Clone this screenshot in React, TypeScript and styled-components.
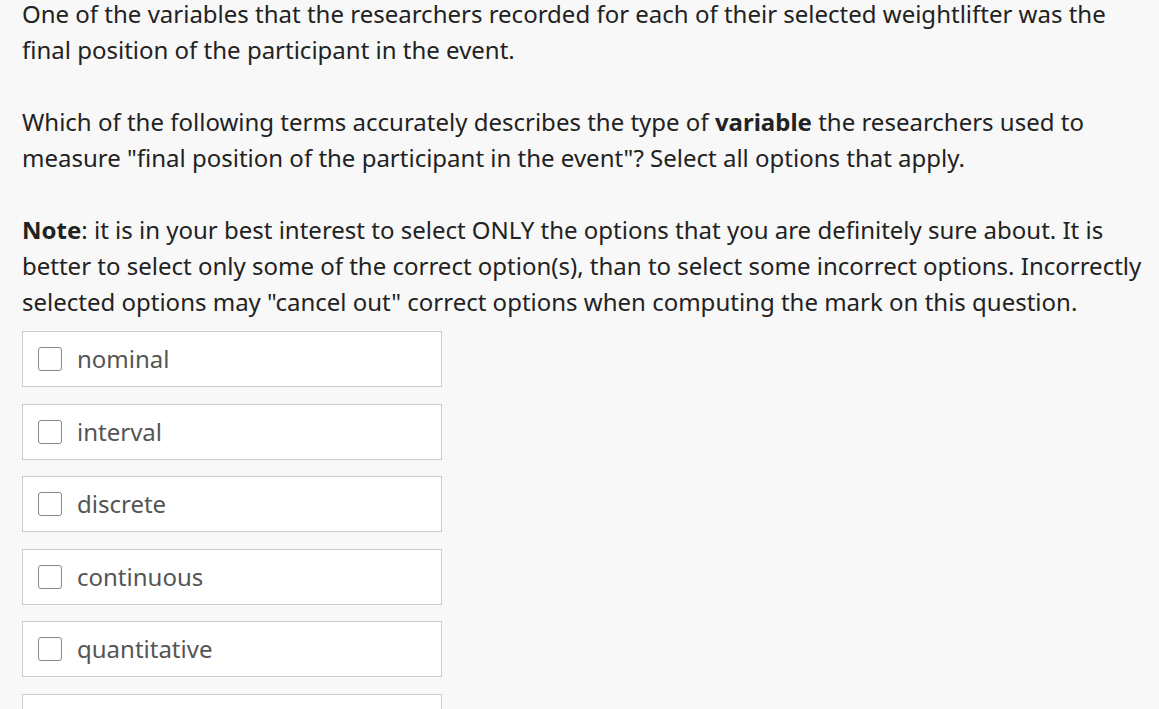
import React from 'react';
import styled, { createGlobalStyle } from 'styled-components';

const GlobalStyle = createGlobalStyle`
  html, body {
    margin: 0;
    padding: 0;
    background: #f8f8f8;
  }
  body {
    font-family: "Noto Sans", "Open Sans", sans-serif;
    color: #222;
  }
`;

const Page = styled.div`
  padding: 0 10px 0 22px;
  margin-top: -4px;
  font-size: 24px;
  line-height: 36px;
`;

const Para = styled.p<{ $last?: boolean }>`
  margin: 0 0 ${({ $last }) => ($last ? '11px' : '36px')};
`;

const Options = styled.div`
  display: flex;
  flex-direction: column;
  gap: 16.6px;
`;

const Option = styled.label`
  box-sizing: border-box;
  width: 420px;
  height: 56px;
  background: #fff;
  border: 1px solid #ccc;
  display: flex;
  align-items: center;
  padding-left: 15px;
  gap: 15px;
  color: #555;
  cursor: pointer;
`;

const Box = styled.span`
  box-sizing: border-box;
  width: 24px;
  height: 24px;
  border: 1px solid #888;
  border-radius: 3px;
  background: #fff;
  flex-shrink: 0;
`;

const options = ['nominal', 'interval', 'discrete', 'continuous', 'quantitative', 'qualitative'];

export default function App() {
  return (
    <>
      <GlobalStyle />
      <Page>
        <Para>
          One of the variables that the researchers recorded for each of their selected weightlifter was the
          final position of the participant in the event.
        </Para>
        <Para>
          Which of the following terms accurately describes the type of <b>variable</b> the researchers used to
          measure "final position of the participant in the event"? Select all options that apply.
        </Para>
        <Para $last>
          <b>Note</b>: it is in your best interest to select ONLY the options that you are definitely sure about. It is
          better to select only some of the correct option(s), than to select some incorrect options. Incorrectly
          selected options may "cancel out" correct options when computing the mark on this question.
        </Para>
        <Options>
          {options.map((o) => (
            <Option key={o}>
              <Box />
              {o}
            </Option>
          ))}
        </Options>
      </Page>
    </>
  );
}
